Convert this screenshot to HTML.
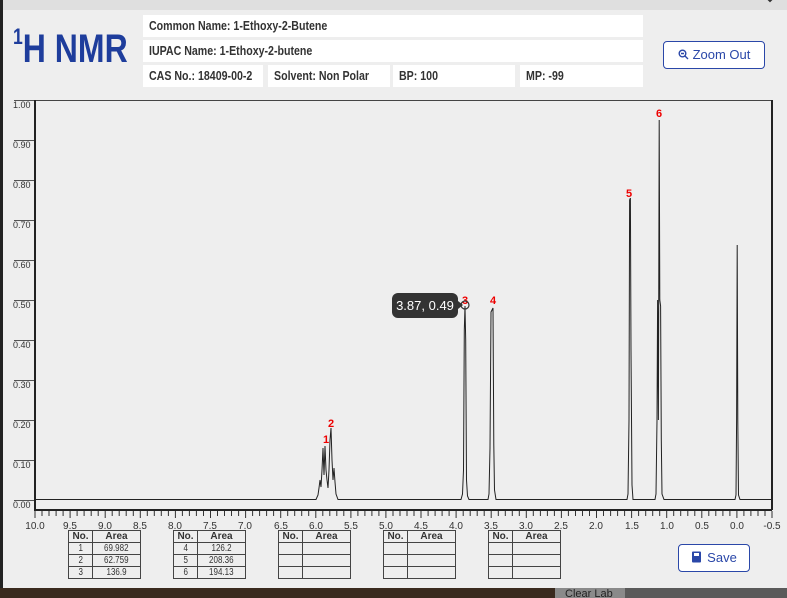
<!DOCTYPE html>
<html><head><style>
*{margin:0;padding:0;box-sizing:border-box}
body{width:787px;height:598px;overflow:hidden;background:#2a2420;position:relative;font-family:"Liberation Sans",sans-serif}
.modal{position:absolute;left:3px;top:0;width:784px;height:588px;background:#eeeeee}
.topbar{position:absolute;left:0;top:0;width:784px;height:10px;background:#dfdfdf}
.title{position:absolute;left:10px;top:27px;font-size:40px;font-weight:bold;color:#1e3d9c;transform:scaleX(0.8);transform-origin:left top}
.title sup{font-size:22px;position:relative;top:-3px;vertical-align:top}
.box{position:absolute;background:#fff;font-size:12.5px;font-weight:bold;color:#333;padding-left:6px;line-height:22px;white-space:nowrap;overflow:hidden}
.box span{display:inline-block;transform:scaleX(0.85);transform-origin:left center}
.btn{position:absolute;border:1.5px solid #2a47a8;border-radius:4px;background:#fff;color:#2a47a8;font-size:13px;text-align:center}
table{position:absolute;border-collapse:collapse;font-size:10px;color:#333;background:#eee}
td{border:1px solid #444;height:12px;text-align:center;padding:0;line-height:10px}
td span{display:inline-block;transform:scaleX(0.8)}
th{border:1px solid #444;height:12px;font-size:10px;color:#333;padding:0}
</style></head><body>
<div class="modal">
<div class="topbar"></div>
<svg style="position:absolute;left:759px;top:-5px" width="16" height="12"><path d="M2 0 L8 6 L14 0" stroke="#333" stroke-width="2" fill="none"/></svg>
<div class="title"><sup>1</sup>H NMR</div>
<div class="box" style="left:140px;top:15px;width:500px"><span>Common Name: 1-Ethoxy-2-Butene</span></div>
<div class="box" style="left:140px;top:40px;width:500px"><span>IUPAC Name: 1-Ethoxy-2-butene</span></div>
<div class="box" style="left:140px;top:65px;width:120px"><span>CAS No.: 18409-00-2</span></div>
<div class="box" style="left:265px;top:65px;width:122px"><span>Solvent: Non Polar</span></div>
<div class="box" style="left:390px;top:65px;width:122px"><span>BP: 100</span></div>
<div class="box" style="left:517px;top:65px;width:123px"><span>MP: -99</span></div>
<div class="btn" style="left:660px;top:41px;width:102px;height:28px;line-height:25px"><svg width="11" height="11" style="vertical-align:-1px;margin-right:4px"><circle cx="4.5" cy="4.5" r="3.3" stroke="#2a47a8" stroke-width="1.4" fill="none"/><path d="M7 7 L10 10 M3 4.5 H6" stroke="#2a47a8" stroke-width="1.4"/></svg>Zoom Out</div>
<div class="btn" style="left:675px;top:544px;width:72px;height:28px;line-height:25px"><svg width="11" height="12" style="vertical-align:-1px;margin-right:5px"><rect x="1" y="0.5" width="9" height="11" rx="1" fill="#2a47a8"/><rect x="3" y="2" width="5" height="3" fill="#fff"/></svg>Save</div>
</div>
<svg style="position:absolute;left:0;top:0" width="787" height="598" font-family="Liberation Sans, sans-serif">
<rect x="0" y="0" width="3" height="588" fill="#222"/>
<rect x="0" y="588" width="787" height="10" fill="#3a2a1e"/>
<rect x="555" y="588" width="70" height="10" fill="#8a8a8a"/>
<rect x="625" y="588" width="162" height="10" fill="#5a5a5a"/>
<text x="565" y="597" font-size="11" fill="#222">Clear Lab</text>
<path d="M35 100.5 H772" stroke="#444" stroke-width="1" fill="none"/>
<path d="M772 100 V510" stroke="#222" stroke-width="2" fill="none"/>
<path d="M35 100 V510 H772" stroke="#222" stroke-width="2" fill="none"/>
<g stroke="#222" stroke-width="0.8">
<path d="M14 100.5H35M14 140.5H35M14 180.5H35M14 220.5H35M14 260.5H35M14 300.5H35M14 340.5H35M14 380.5H35M14 420.5H35M14 460.5H35M14 500.5H35"/>
</g>
<g font-size="9" fill="#333">
<text x="13" y="108">1.00</text><text x="13" y="148">0.90</text><text x="13" y="188">0.80</text><text x="13" y="228">0.70</text><text x="13" y="268">0.60</text><text x="13" y="308">0.50</text><text x="13" y="348">0.40</text><text x="13" y="388">0.30</text><text x="13" y="428">0.20</text><text x="13" y="468">0.10</text><text x="13" y="508">0.00</text>
</g>
<g id="ticks" stroke="#333" stroke-width="1"></g>
<g font-size="10" fill="#333" text-anchor="middle">
<text x="35" y="529">10.0</text><text x="70" y="529">9.5</text><text x="105" y="529">9.0</text><text x="140" y="529">8.5</text><text x="175" y="529">8.0</text><text x="210" y="529">7.5</text><text x="245" y="529">7.0</text><text x="281" y="529">6.5</text><text x="316" y="529">6.0</text><text x="351" y="529">5.5</text><text x="386" y="529">5.0</text><text x="421" y="529">4.5</text><text x="456" y="529">4.0</text><text x="491" y="529">3.5</text><text x="526" y="529">3.0</text><text x="561" y="529">2.5</text><text x="596" y="529">2.0</text><text x="632" y="529">1.5</text><text x="667" y="529">1.0</text><text x="702" y="529">0.5</text><text x="737" y="529">0.0</text><text x="772" y="529">-0.5</text>
</g>
<g stroke="#222" stroke-width="1" fill="none">
<path d="M36 499.5 H316 L318 495 L319 488 L320 480 L321 487 L322 470 L323 448 L324 475 L325 446 L326 470 L327 480 L328 488 L329 470 L330 440 L331 428 L332 460 L333 480 L334 468 L335 482 L336 494 L338 499.5 H461 L462.5 494 L463.5 470 L464.3 330 L465 306 L465.7 340 L466.5 480 L467.5 496 L469 499.5 H488 L489 494 L490 448 L491 312 L492 310 L493 308 L493.8 445 L494.5 490 L496 499.5 H627 L628 494 L629 420 L629.6 200 L630.4 198 L631 350 L632 485 L633 499.5 H655 L656 494 L657 420 L657.6 300 L658.4 420 L659.2 120 L659.8 300 L660.6 306 L661.3 440 L662 494 L664 499.5 H735 L736 495 L736.6 420 L737.2 245 L737.8 420 L738.5 495 L740 499.5 H771"/>
</g>
<g font-size="11" font-weight="bold" fill="#e00" text-anchor="middle">
<text x="326" y="443">1</text><text x="331" y="427">2</text><text x="465" y="304">3</text><text x="493" y="304">4</text><text x="629" y="197">5</text><text x="659" y="117">6</text>
</g>
<rect x="392" y="293" width="66" height="25" rx="6" fill="#333"/>
<path d="M458 301 L463 305 L458 309Z" fill="#333"/>
<text x="425" y="310" font-size="13" fill="#fff" text-anchor="middle">3.87, 0.49</text>
<circle cx="465" cy="305" r="4" fill="none" stroke="#333" stroke-width="1.2"/>
</svg>
<table style="left:68px;top:530px;width:73px"><tr><th style="width:24px">No.</th><th>Area</th></tr><tr><td><span>1</span></td><td><span>69.982</span></td></tr><tr><td><span>2</span></td><td><span>62.759</span></td></tr><tr><td><span>3</span></td><td><span>136.9</span></td></tr></table>
<table style="left:173px;top:530px;width:73px"><tr><th style="width:24px">No.</th><th>Area</th></tr><tr><td><span>4</span></td><td><span>126.2</span></td></tr><tr><td><span>5</span></td><td><span>208.36</span></td></tr><tr><td><span>6</span></td><td><span>194.13</span></td></tr></table>
<table style="left:278px;top:530px;width:73px"><tr><th style="width:24px">No.</th><th>Area</th></tr><tr><td></td><td></td></tr><tr><td></td><td></td></tr><tr><td></td><td></td></tr></table>
<table style="left:383px;top:530px;width:73px"><tr><th style="width:24px">No.</th><th>Area</th></tr><tr><td></td><td></td></tr><tr><td></td><td></td></tr><tr><td></td><td></td></tr></table>
<table style="left:488px;top:530px;width:73px"><tr><th style="width:24px">No.</th><th>Area</th></tr><tr><td></td><td></td></tr><tr><td></td><td></td></tr><tr><td></td><td></td></tr></table>
<script>
var g=document.getElementById('ticks'),d='';
for(var i=0;i<=105;i++){var x=35+i*7.019;d+='M'+x.toFixed(1)+' 511V'+(i%5==0?518:516);}
var p=document.createElementNS('http://www.w3.org/2000/svg','path');p.setAttribute('d',d);g.appendChild(p);
</script>
</body></html>
